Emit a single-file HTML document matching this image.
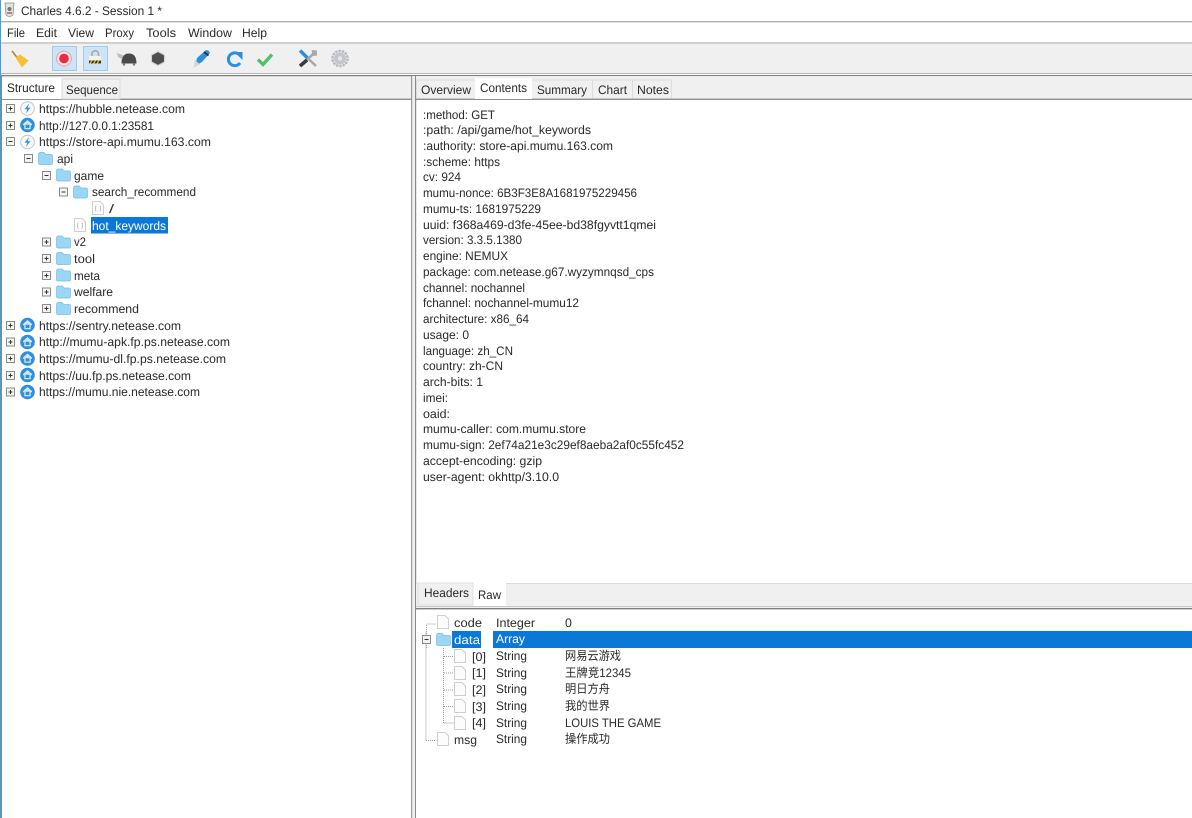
<!DOCTYPE html>
<html><head><meta charset="utf-8"><style>
html,body{margin:0;padding:0;background:#fff;width:1192px;height:818px;overflow:hidden}
svg{display:block}
text{font-family:"Liberation Sans","Noto Sans CJK SC",sans-serif;font-size:12.3px;fill:#2a2a2a;text-rendering:geometricPrecision}
.t{filter:blur(.3px)}
</style></head><body>
<svg width="1192" height="818" viewBox="0 0 1192 818" xmlns="http://www.w3.org/2000/svg">
<defs>
<g id="folder"><path d="M.5 3.500Q.5 1.500 2.500 1.500H6L8 3.500H13Q14.500 3.500 14.500 5V12Q14.500 13.500 13 13.500H2Q.5 13.500 .5 12Z" fill="#9ad7f6" stroke="#76bde4" stroke-width=".7"/></g>
<g id="plus"><rect x=".5" y=".5" width="8" height="8" fill="#f4f4f4" stroke="#8a8a8a"/><path d="M2.500 4.500H6.500M4.500 2.500V6.500" stroke="#333"/></g>
<g id="minus"><rect x=".5" y=".5" width="8" height="8" fill="#f4f4f4" stroke="#8a8a8a"/><path d="M2.500 4.500H6.500" stroke="#333"/></g>
<g id="bolt"><circle cx="7.500" cy="7.500" r="6.800" fill="#fafafa" stroke="#c4c4c4"/><path d="M9 2.500L4.500 8.300H7.200L6 12.500L10.600 6.600H7.800Z" fill="#3b95dd"/></g>
<g id="globe"><circle cx="7.500" cy="7.500" r="7.300" fill="#2f8fdc"/><path d="M7.500 2.500L3 6.500V7.800H4.300V11.800H10.700V7.800H12V6.500ZM5.600 7.200H9.400V10.500H5.600Z" fill="#cfe7f8" fill-rule="evenodd"/></g>
<g id="doc"><path d="M.5 .5H8L11.500 4V13.500H.5Z" fill="#fcfcfc" stroke="#cfcfcf"/></g>
<g id="jdoc"><path d="M.5 .5H8L11.500 4V13.500H.5Z" fill="#fcfcfc" stroke="#cfcfcf"/><path d="M4.500 5Q3.600 5 3.600 6V7Q3.600 7.600 3 7.600Q3.600 7.600 3.600 8.200V9Q3.600 10 4.500 10M7.500 5Q8.400 5 8.400 6V7Q8.400 7.600 9 7.600Q8.400 7.600 8.400 8.200V9Q8.400 10 7.500 10" fill="none" stroke="#aaa" stroke-width=".7"/></g>
</defs>

<rect width="1192" height="818" fill="#fff"/>
<rect x="0" y="43" width="1192" height="31" fill="#f0f0f0"/>
<rect x="0" y="75" width="1192" height="24" fill="#f0f0f0"/>
<rect y="21" width="1192" height="1.400" fill="#b0b0b0"/>
<rect y="42" width="1192" height="2" fill="#cfcfcf"/>
<rect y="73" width="1192" height="1" fill="#b4b4b4"/>
<rect y="75" width="1192" height="1.200" fill="#7c7c7c"/>
<rect x="0" y="0" width="1" height="818" fill="#3aa0e6"/>
<rect x="1" y="76" width="1" height="742" fill="#888"/>

<rect x="2" y="98" width="409" height="1" fill="#c8c8c8"/>
<rect x="2" y="99" width="409" height="1" fill="#909090"/>
<rect x="2" y="78" width="60" height="21" fill="#fff"/>
<rect x="62" y="79" width="58" height="20" fill="#f0f0f0" stroke="#dadada" stroke-width="1"/>
<rect x="2" y="100" width="409" height="718" fill="#fff"/>
<rect x="411" y="76" width="5" height="742" fill="#f0f0f0"/>
<rect x="411" y="76" width="1.200" height="742" fill="#9a9a9a"/>
<rect x="415" y="76" width="1.200" height="742" fill="#8a8a8a"/>

<rect x="416" y="76" width="776" height="22" fill="#f0f0f0"/>
<rect x="416" y="98" width="776" height="1" fill="#c8c8c8"/>
<rect x="416" y="99" width="776" height="1.200" fill="#909090"/>
<rect x="475" y="78" width="57" height="21" fill="#fff"/>
<g fill="none" stroke="#dcdcdc"><path d="M416.500 98V80H474.500M532.500 80H592.500V98M632.500 80V98M671.500 80V98M592.500 80H671.500"/></g>
<rect x="417" y="100" width="775" height="483" fill="#fff"/>

<rect x="416" y="583" width="776" height="26" fill="#f0f0f0"/>
<rect x="416" y="583" width="776" height="1" fill="#dcdcdc"/>
<rect x="473" y="583" width="33" height="23" fill="#fff"/>
<rect x="418" y="583" width="55" height="22" fill="#f0f0f0" stroke="#e0e0e0"/>
<rect x="416" y="606" width="776" height="1" fill="#c8c8c8"/>
<rect x="416" y="608" width="776" height="1.400" fill="#808080"/>
<rect x="416" y="610" width="776" height="208" fill="#fff"/>

<rect x="52.500" y="46.500" width="24" height="24" fill="#cde4f7" stroke="#9ccbee"/>
<rect x="83.500" y="46.500" width="24" height="24" fill="#cde4f7" stroke="#9ccbee"/>

<path d="M5 3H14L13 15Q9.500 18 6 15Z" fill="#dfe3df" stroke="#8a8f8a" stroke-width=".8"/><circle cx="9.500" cy="9" r="2" fill="#777"/><path d="M7 13H12" stroke="#c55" stroke-width="1.500"/>

<path d="M12 51L17.500 58" stroke="#a8853f" stroke-width="1.600"/><path d="M15.500 57.500L20 54.500L28.500 60.500L22 67.500Z" fill="#f6c02f"/>
<circle cx="64" cy="58.500" r="7.500" fill="#fbe3e6" stroke="#e8a2ab"/><circle cx="64" cy="58.500" r="4.800" fill="#ee2b3e"/>
<path d="M92 56V53.500A3.300 3.300 0 0 1 98.500 53.500V56" fill="none" stroke="#ababab" stroke-width="1.700"/><rect x="89" y="56" width="12" height="8" fill="#f6f4e8"/><rect x="89" y="60.500" width="12" height="3" fill="#332f20"/><path d="M90 63.500L92 60.500M93.500 63.500L95.500 60.500M97 63.500L99 60.500" stroke="#f2c92e" stroke-width="1.200"/>
<path d="M121.500 63.500Q121.500 53.500 129 53.500Q136.500 53.500 136.500 63.500Z" fill="#4a4a4a"/><path d="M117 53L123.500 55.500L122 59L118 57Z" fill="#bcbcbc"/><path d="M124 63V65.500M134 63V65.500" stroke="#777" stroke-width="2.200"/>
<path d="M158 51.500L164.500 55V62L158 65.500L151.500 62V55Z" fill="#4e4e4e" stroke="#d4d4d4" stroke-width="1.100"/>
<path d="M195 66L197 58L206 50Q209 50 210 53L202 62Z" fill="#2e8fe0"/><path d="M193.500 67.500L195 60L200 64.500Z" fill="#cfd6dc"/><path d="M204 52L208.500 55.500" stroke="#333" stroke-width="1.800"/>
<path d="M240 55.500A6.400 6.400 0 1 0 240 63" fill="none" stroke="#2b8fe0" stroke-width="3"/><path d="M234.500 52H242.500V60Z" fill="#2b8fe0"/>
<path d="M258 59.500L263 64.500L272 54.500" fill="none" stroke="#4cc06a" stroke-width="3.300"/>
<path d="M300 50.500L308 58.500" stroke="#2b8fe0" stroke-width="3.400"/><path d="M308 58.500L316 66" stroke="#a4a6a8" stroke-width="2.400"/><path d="M314.500 52.500L307 60" stroke="#a4a6a8" stroke-width="2.600"/><path d="M307 60L300 66" stroke="#3a3a3a" stroke-width="3.600"/><path d="M311.500 50L317 50.500L317 55.500L313 56Z" fill="#a8a8a8"/>
<circle cx="340" cy="58.500" r="7.600" fill="none" stroke="#b4b7bd" stroke-width="2.400" stroke-dasharray="2.400 1"/><circle cx="340" cy="58.500" r="6" fill="#c2c5ca"/><circle cx="340" cy="58.500" r="2.200" fill="#e8e8e8"/>

<use href="#plus" x="6" y="104"/><use href="#bolt" x="20" y="101"/>
<use href="#plus" x="6" y="121"/><use href="#globe" x="20" y="117.500"/>
<use href="#minus" x="6" y="137"/><use href="#bolt" x="20" y="134.500"/>
<use href="#minus" x="24" y="154"/><use href="#folder" x="38" y="151"/>
<use href="#minus" x="42" y="171"/><use href="#folder" x="56" y="167.500"/>
<use href="#minus" x="59" y="187.500"/><use href="#folder" x="73" y="184.500"/>
<use href="#jdoc" x="92" y="201"/>
<use href="#jdoc" x="74" y="218"/>
<rect x="91" y="217" width="77" height="16.500" fill="#0a78d7"/>
<use href="#plus" x="42" y="237.500"/><use href="#folder" x="56" y="234.500"/>
<use href="#plus" x="42" y="254"/><use href="#folder" x="56" y="251"/>
<use href="#plus" x="42" y="271"/><use href="#folder" x="56" y="267.500"/>
<use href="#plus" x="42" y="287.500"/><use href="#folder" x="56" y="284.500"/>
<use href="#plus" x="42" y="304"/><use href="#folder" x="56" y="301"/>
<use href="#plus" x="6" y="321"/><use href="#globe" x="20" y="317.500"/>
<use href="#plus" x="6" y="337.500"/><use href="#globe" x="20" y="334.500"/>
<use href="#plus" x="6" y="354"/><use href="#globe" x="20" y="351"/>
<use href="#plus" x="6" y="371"/><use href="#globe" x="20" y="367.500"/>
<use href="#plus" x="6" y="387.500"/><use href="#globe" x="20" y="384.500"/>

<rect x="452" y="631" width="29" height="17" fill="#0a78d7"/>
<rect x="493" y="631" width="699" height="17" fill="#0a78d7"/>
<g fill="none" stroke="#999" stroke-dasharray="1 1">
<path d="M426.500 648V624H436M426 740.500V632M426 740.500H436M443.500 648V723H456M444 656.500H456M444 673H456M444 690H456M444 706.500H456"/>
</g>
<use href="#minus" x="422" y="635"/><use href="#folder" x="436" y="632"/>
<use href="#doc" x="437" y="615"/>
<use href="#doc" x="454" y="649"/><use href="#doc" x="454" y="666"/><use href="#doc" x="454" y="682"/><use href="#doc" x="454" y="699"/><use href="#doc" x="454" y="716"/>
<use href="#doc" x="437" y="732"/>

<g class="t">
<text x="21" y="15" textLength="141" lengthAdjust="spacingAndGlyphs">Charles 4.6.2 - Session 1 *</text>
<text x="7" y="37" textLength="18" lengthAdjust="spacingAndGlyphs">File</text>
<text x="36" y="37" textLength="21" lengthAdjust="spacingAndGlyphs">Edit</text>
<text x="68" y="37" textLength="26" lengthAdjust="spacingAndGlyphs">View</text>
<text x="105" y="37" textLength="29" lengthAdjust="spacingAndGlyphs">Proxy</text>
<text x="146" y="37" textLength="30" lengthAdjust="spacingAndGlyphs">Tools</text>
<text x="188" y="37" textLength="44" lengthAdjust="spacingAndGlyphs">Window</text>
<text x="242" y="37" textLength="25" lengthAdjust="spacingAndGlyphs">Help</text>

<text x="7" y="92" textLength="48" lengthAdjust="spacingAndGlyphs">Structure</text>
<text x="66" y="94" textLength="52" lengthAdjust="spacingAndGlyphs">Sequence</text>

<text x="39" y="113" textLength="146" lengthAdjust="spacingAndGlyphs">https://hubble.netease.com</text>
<text x="39" y="130" textLength="115" lengthAdjust="spacingAndGlyphs">http://127.0.0.1:23581</text>
<text x="39" y="146" textLength="172" lengthAdjust="spacingAndGlyphs">https://store-api.mumu.163.com</text>
<text x="57" y="163" textLength="16" lengthAdjust="spacingAndGlyphs">api</text>
<text x="74" y="180" textLength="30" lengthAdjust="spacingAndGlyphs">game</text>
<text x="92" y="196" textLength="104" lengthAdjust="spacingAndGlyphs">search_recommend</text>
<text x="109" y="213" textLength="5" lengthAdjust="spacingAndGlyphs">/</text>
<text x="92" y="230" textLength="74" lengthAdjust="spacingAndGlyphs" style="fill:#fff">hot_keywords</text>
<text x="74" y="246" textLength="12" lengthAdjust="spacingAndGlyphs">v2</text>
<text x="74" y="263" textLength="21" lengthAdjust="spacingAndGlyphs">tool</text>
<text x="74" y="280" textLength="26" lengthAdjust="spacingAndGlyphs">meta</text>
<text x="74" y="296" textLength="39" lengthAdjust="spacingAndGlyphs">welfare</text>
<text x="74" y="313" textLength="65" lengthAdjust="spacingAndGlyphs">recommend</text>
<text x="39" y="330" textLength="142" lengthAdjust="spacingAndGlyphs">https://sentry.netease.com</text>
<text x="39" y="346" textLength="191" lengthAdjust="spacingAndGlyphs">http://mumu-apk.fp.ps.netease.com</text>
<text x="39" y="363" textLength="187" lengthAdjust="spacingAndGlyphs">https://mumu-dl.fp.ps.netease.com</text>
<text x="39" y="380" textLength="152" lengthAdjust="spacingAndGlyphs">https://uu.fp.ps.netease.com</text>
<text x="39" y="396" textLength="161" lengthAdjust="spacingAndGlyphs">https://mumu.nie.netease.com</text>

<text x="421" y="94" textLength="50" lengthAdjust="spacingAndGlyphs">Overview</text>
<text x="480" y="92" textLength="47" lengthAdjust="spacingAndGlyphs">Contents</text>
<text x="537" y="94" textLength="50" lengthAdjust="spacingAndGlyphs">Summary</text>
<text x="598" y="94" textLength="29" lengthAdjust="spacingAndGlyphs">Chart</text>
<text x="637" y="94" textLength="32" lengthAdjust="spacingAndGlyphs">Notes</text>

<text x="423" y="119" textLength="72" lengthAdjust="spacingAndGlyphs">:method: GET</text>
<text x="423" y="134" textLength="168" lengthAdjust="spacingAndGlyphs">:path: /api/game/hot_keywords</text>
<text x="423" y="150" textLength="190" lengthAdjust="spacingAndGlyphs">:authority: store-api.mumu.163.com</text>
<text x="423" y="166" textLength="77" lengthAdjust="spacingAndGlyphs">:scheme: https</text>
<text x="423" y="181" textLength="38" lengthAdjust="spacingAndGlyphs">cv: 924</text>
<text x="423" y="197" textLength="214" lengthAdjust="spacingAndGlyphs">mumu-nonce: 6B3F3E8A1681975229456</text>
<text x="423" y="213" textLength="118" lengthAdjust="spacingAndGlyphs">mumu-ts: 1681975229</text>
<text x="423" y="229" textLength="233" lengthAdjust="spacingAndGlyphs">uuid: f368a469-d3fe-45ee-bd38fgyvtt1qmei</text>
<text x="423" y="244" textLength="99" lengthAdjust="spacingAndGlyphs">version: 3.3.5.1380</text>
<text x="423" y="260" textLength="85" lengthAdjust="spacingAndGlyphs">engine: NEMUX</text>
<text x="423" y="276" textLength="231" lengthAdjust="spacingAndGlyphs">package: com.netease.g67.wyzymnqsd_cps</text>
<text x="423" y="292" textLength="102" lengthAdjust="spacingAndGlyphs">channel: nochannel</text>
<text x="423" y="307" textLength="156" lengthAdjust="spacingAndGlyphs">fchannel: nochannel-mumu12</text>
<text x="423" y="323" textLength="106" lengthAdjust="spacingAndGlyphs">architecture: x86_64</text>
<text x="423" y="339" textLength="46" lengthAdjust="spacingAndGlyphs">usage: 0</text>
<text x="423" y="355" textLength="90" lengthAdjust="spacingAndGlyphs">language: zh_CN</text>
<text x="423" y="370" textLength="80" lengthAdjust="spacingAndGlyphs">country: zh-CN</text>
<text x="423" y="386" textLength="60" lengthAdjust="spacingAndGlyphs">arch-bits: 1</text>
<text x="423" y="402" textLength="25" lengthAdjust="spacingAndGlyphs">imei:</text>
<text x="423" y="418" textLength="27" lengthAdjust="spacingAndGlyphs">oaid:</text>
<text x="423" y="433" textLength="163" lengthAdjust="spacingAndGlyphs">mumu-caller: com.mumu.store</text>
<text x="423" y="449" textLength="261" lengthAdjust="spacingAndGlyphs">mumu-sign: 2ef74a21e3c29ef8aeba2af0c55fc452</text>
<text x="423" y="465" textLength="119" lengthAdjust="spacingAndGlyphs">accept-encoding: gzip</text>
<text x="423" y="481" textLength="136" lengthAdjust="spacingAndGlyphs">user-agent: okhttp/3.10.0</text>

<text x="424" y="597" textLength="45" lengthAdjust="spacingAndGlyphs">Headers</text>
<text x="478" y="599" textLength="23" lengthAdjust="spacingAndGlyphs">Raw</text>

<text x="454" y="627" textLength="28" lengthAdjust="spacingAndGlyphs">code</text>
<text x="496" y="627" textLength="39" lengthAdjust="spacingAndGlyphs">Integer</text>
<text x="565" y="627">0</text>
<text x="454" y="644" textLength="26" lengthAdjust="spacingAndGlyphs" style="fill:#fff">data</text>
<text x="496" y="643" textLength="29" lengthAdjust="spacingAndGlyphs" style="fill:#fff">Array</text>
<text x="472" y="661" textLength="14" lengthAdjust="spacingAndGlyphs">[0]</text>
<text x="496" y="660" textLength="31" lengthAdjust="spacingAndGlyphs">String</text>
<text x="565" y="660" textLength="56" lengthAdjust="spacingAndGlyphs">网易云游戏</text>
<text x="472" y="677" textLength="14" lengthAdjust="spacingAndGlyphs">[1]</text>
<text x="496" y="677" textLength="31" lengthAdjust="spacingAndGlyphs">String</text>
<text x="565" y="677" textLength="66" lengthAdjust="spacingAndGlyphs">王牌竞12345</text>
<text x="472" y="694" textLength="14" lengthAdjust="spacingAndGlyphs">[2]</text>
<text x="496" y="693" textLength="31" lengthAdjust="spacingAndGlyphs">String</text>
<text x="565" y="693" textLength="45" lengthAdjust="spacingAndGlyphs">明日方舟</text>
<text x="472" y="711" textLength="14" lengthAdjust="spacingAndGlyphs">[3]</text>
<text x="496" y="710" textLength="31" lengthAdjust="spacingAndGlyphs">String</text>
<text x="565" y="710" textLength="45" lengthAdjust="spacingAndGlyphs">我的世界</text>
<text x="472" y="727" textLength="14" lengthAdjust="spacingAndGlyphs">[4]</text>
<text x="496" y="727" textLength="31" lengthAdjust="spacingAndGlyphs">String</text>
<text x="565" y="727" textLength="96" lengthAdjust="spacingAndGlyphs">LOUIS THE GAME</text>
<text x="454" y="744" textLength="23" lengthAdjust="spacingAndGlyphs">msg</text>
<text x="496" y="743" textLength="31" lengthAdjust="spacingAndGlyphs">String</text>
<text x="565" y="743" textLength="45" lengthAdjust="spacingAndGlyphs">操作成功</text>
</g>
</svg>
</body></html>
